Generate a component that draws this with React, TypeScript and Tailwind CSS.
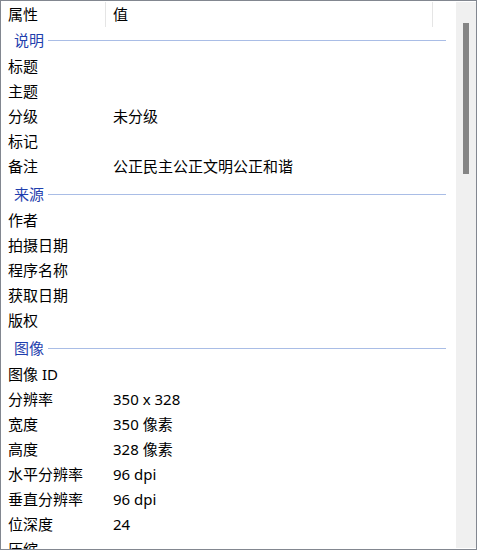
import React from "react";

type Group = { title: string; rows: [string, string][] };

const groups: Group[] = [
  {
    title: "说明",
    rows: [
      ["标题", ""],
      ["主题", ""],
      ["分级", "未分级"],
      ["标记", ""],
      ["备注", "公正民主公正文明公正和谐"],
    ],
  },
  {
    title: "来源",
    rows: [
      ["作者", ""],
      ["拍摄日期", ""],
      ["程序名称", ""],
      ["获取日期", ""],
      ["版权", ""],
    ],
  },
  {
    title: "图像",
    rows: [
      ["图像 ID", ""],
      ["分辨率", "350 x 328"],
      ["宽度", "350 像素"],
      ["高度", "328 像素"],
      ["水平分辨率", "96 dpi"],
      ["垂直分辨率", "96 dpi"],
      ["位深度", "24"],
      ["压缩", ""],
    ],
  },
];

export default function App() {
  return (
    <div
      className="w-[477px] h-[550px] border border-[#828790] bg-white flex overflow-hidden text-[15px] text-black"
      style={{ fontFamily: '"Segoe UI", "Noto Sans", "Noto Sans CJK SC", sans-serif' }}
    >
      <div className="flex-1 overflow-hidden flex flex-col">
        <div className="h-[24px] shrink-0 flex items-center relative pt-[2px]">
          <div className="w-[104px] pl-[7px] leading-none">属性</div>
          <div className="w-[1px] h-[25px] bg-[#e5e5e5] self-start -mt-[1px]" />
          <div className="w-[326px] pl-[7px] leading-none">值</div>
          <div className="w-[1px] h-[25px] bg-[#e5e5e5] self-start -mt-[1px]" />
        </div>
        {groups.map((g) => (
          <div key={g.title} className="flex flex-col shrink-0">
            <div className="h-[29px] flex items-center pt-[2px] pl-[13px] pr-[10px]">
              <span className="text-[#1f3fae] leading-none">{g.title}</span>
              <div className="flex-1 h-[1px] bg-[#a9bde6] ml-[4px]" />
            </div>
            {g.rows.map(([k, v]) => (
              <div key={k} className="h-[25px] flex items-center leading-none">
                <div className="w-[105px] pl-[7px] whitespace-nowrap">{k}</div>
                <div className="pl-[7px] whitespace-nowrap">{v}</div>
              </div>
            ))}
          </div>
        ))}
      </div>
      <div className="w-[20px] shrink-0 py-[1px] flex flex-col">
        <div className="flex-1 bg-[#f0f0f0] flex flex-col items-center pt-[21px]">
          <div className="w-[6px] h-[151px] bg-[#858585]" />
        </div>
      </div>
    </div>
  );
}
